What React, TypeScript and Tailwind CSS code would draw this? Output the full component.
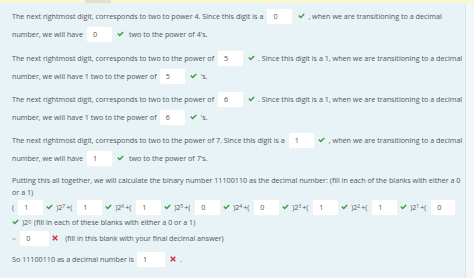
import React from "react";

const Check = () => (
  <svg viewBox="0 0 12 10" className="w-[7px] h-[6px] shrink-0" fill="#3e9a3e">
    <path d="M0.5 5.2 L2.3 3.4 L4.6 5.7 L9.7 0.6 L11.5 2.4 L4.6 9.3 Z" />
  </svg>
);

const Cross = () => (
  <svg viewBox="0 0 10 10" className="w-[6px] h-[6px] shrink-0" fill="#d0353f">
    <path d="M0.3 2.1 L2.1 0.3 L5 3.2 L7.9 0.3 L9.7 2.1 L6.8 5 L9.7 7.9 L7.9 9.7 L5 6.8 L2.1 9.7 L0.3 7.9 L3.2 5 Z" />
  </svg>
);

const Box = ({ v, w = "w-[27px]" }: { v: string; w?: string }) => (
  <span className={`${w} h-[17px] bg-white rounded-[2px] border border-[#eef2f3] flex items-center pl-[6px] text-[#555] shrink-0`}>
    {v}
  </span>
);

const Row = ({ children, h = "h-[18px]" }: { children: React.ReactNode; h?: string }) => (
  <div className={`flex items-center ${h} whitespace-nowrap`}>{children}</div>
);

const Pow = ({ n }: { n: string }) => (
  <span className="w-[20px] shrink-0 flex items-center">
    )2<sup className="text-[5px] relative -top-[1px]">{n}</sup>
    <span className="ml-[1px]">+(</span>
  </span>
);

export default function App() {
  return (
    <div className="w-[474px] h-[278px] bg-[#f3f7f8] overflow-hidden relative font-['Open_Sans',sans-serif] text-[7.2px] text-[#555]">
      <div className="h-[3px] bg-[#faf6d2] flex">
        <div className="ml-[85px] w-[26px] bg-[#e4e1c8]" />
      </div>
      <div className="w-[466px] h-[275px] bg-[#e7f3f7] border-r border-[#d8e6ea] pl-[12px] pt-[4px]">
        <Row>
          <span>The next rightmost digit, corresponds to two to power 4. Since this digit is a</span>
          <span className="ml-[3px]"><Box v="0" /></span>
          <span className="ml-[5px]"><Check /></span>
          <span className="ml-[3px]">, when we are transitioning to a decimal</span>
        </Row>
        <Row>
          <span>number, we will have</span>
          <span className="ml-[3px]"><Box v="0" /></span>
          <span className="ml-[4px]"><Check /></span>
          <span className="ml-[5px]">two to the power of 4's.</span>
        </Row>
        <div className="h-[6px]" />
        <Row>
          <span>The next rightmost digit, corresponds to two to the power of</span>
          <span className="ml-[3px]"><Box v="5" /></span>
          <span className="ml-[4px]"><Check /></span>
          <span className="ml-[3px]">. Since this digit is a 1, when we are transitioning to a decimal</span>
        </Row>
        <Row>
          <span>number, we will have 1 two to the power of</span>
          <span className="ml-[2px]"><Box v="5" /></span>
          <span className="ml-[4px]"><Check /></span>
          <span className="ml-[4px]">'s.</span>
        </Row>
        <div className="h-[5px]" />
        <Row>
          <span>The next rightmost digit, corresponds to two to the power of</span>
          <span className="ml-[3px]"><Box v="6" /></span>
          <span className="ml-[4px]"><Check /></span>
          <span className="ml-[3px]">. Since this digit is a 1, when we are transitioning to a decimal</span>
        </Row>
        <Row>
          <span>number, we will have 1 two to the power of</span>
          <span className="ml-[2px]"><Box v="6" /></span>
          <span className="ml-[4px]"><Check /></span>
          <span className="ml-[4px]">'s.</span>
        </Row>
        <div className="h-[5px]" />
        <Row>
          <span>The next rightmost digit, corresponds to two to the power of 7. Since this digit is a</span>
          <span className="ml-[3px]"><Box v="1" /></span>
          <span className="ml-[3px]"><Check /></span>
          <span className="ml-[4px]">, when we are transitioning to a decimal</span>
        </Row>
        <Row>
          <span>number, we will have</span>
          <span className="ml-[3px]"><Box v="1" /></span>
          <span className="ml-[4px]"><Check /></span>
          <span className="ml-[5px]">two to the power of 7's.</span>
        </Row>
        <div className="h-[7px]" />
        <div className="leading-[12px] pr-[2px]">
          Putting this all together, we will calculate the binary number 11100110 as the decimal number: (fill in each of the blanks with either a 0 or a 1)
        </div>
        <Row>
          <span className="mr-[3px]">(</span>
          {[
            ["1", "7"],
            ["1", "6"],
            ["1", "5"],
            ["0", "4"],
            ["0", "3"],
            ["1", "2"],
            ["1", "1"],
          ].map(([v, n]) => (
            <React.Fragment key={n}>
              <Box v={v} />
              <span className="ml-[2px] mr-[3px]"><Check /></span>
              <Pow n={n} />
            </React.Fragment>
          ))}
          <Box v="0" w="w-[26px]" />
        </Row>
        <Row h="h-[12px]">
          <Check />
          <span className="ml-[3px]">
            )2<sup className="text-[5px] relative -top-[1px]">0</sup>
          </span>
          <span className="ml-[3px]">(fill in each of these blanks with either a 0 or a 1)</span>
        </Row>
        <div className="h-[1px]" />
        <Row>
          <span className="text-[#9aa] mr-[3px]">=</span>
          <Box v="0" w="w-[31px]" />
          <span className="ml-[2px]"><Cross /></span>
          <span className="ml-[7px]">(fill in this blank with your final decimal answer)</span>
        </Row>
        <div className="h-[3px]" />
        <Row>
          <span>So 11100110 as a decimal number is</span>
          <span className="ml-[2px]"><Box v="1" w="w-[30px]" /></span>
          <span className="ml-[4px]"><Cross /></span>
          <span className="ml-[4px]">.</span>
        </Row>
      </div>
    </div>
  );
}
